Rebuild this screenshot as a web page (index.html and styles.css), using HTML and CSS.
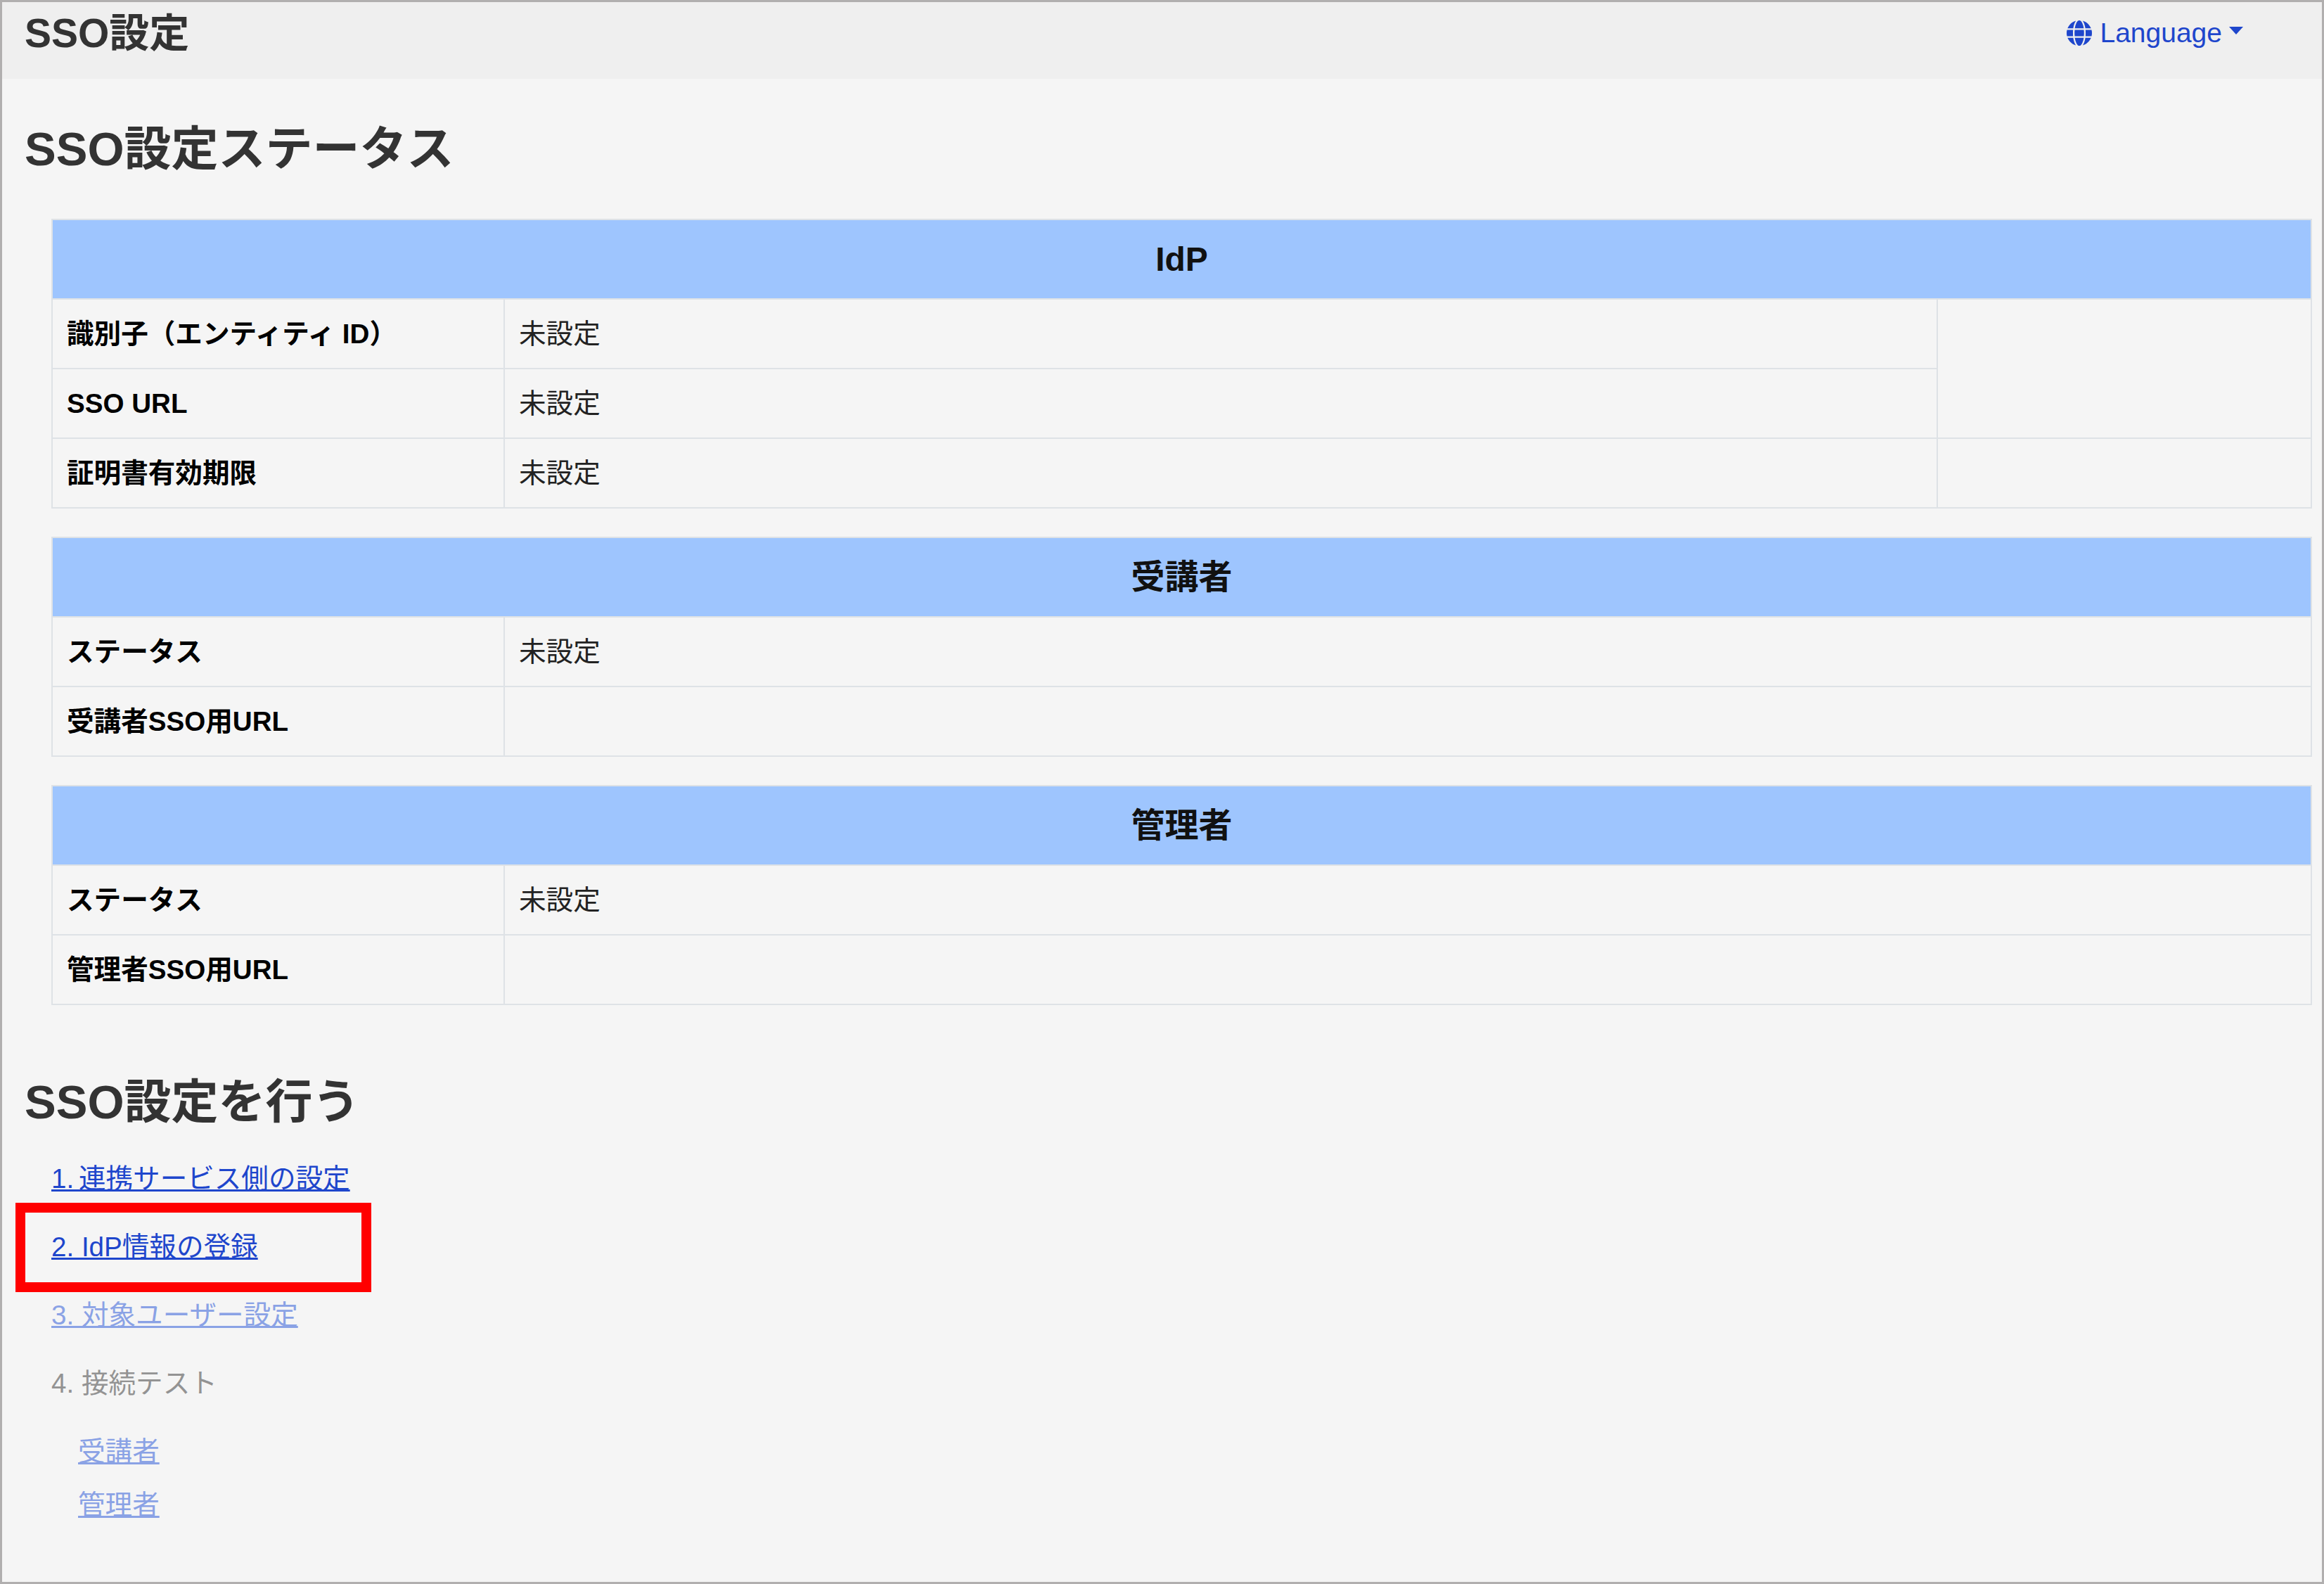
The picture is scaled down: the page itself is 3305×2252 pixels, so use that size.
FILE: index.html
```html
<!DOCTYPE html>
<html lang="ja">
<head>
<meta charset="utf-8">
<title>SSO設定</title>
<link rel="stylesheet" href="styles.css">
</head>
<body>
<div class="frame">
  <header class="topbar">
    <div class="brand">SSO設定</div>
    <a class="lang" href="#">
      <svg class="globe" viewBox="0 0 512 512" aria-hidden="true"><path d="M352 256c0 22-1 44-4 64H164c-3-20-4-42-4-64s1-44 4-64h184c3 20 4 42 4 64zm30-64h122c6 20 8 42 8 64s-2 44-8 64H382c2-20 2-42 2-64s0-44-2-64zm112-32H379c-10-64-30-118-55-152 73 20 134 74 170 152zm-147 0H165c6-37 15-69 27-96 10-24 22-42 33-52 11-11 22-12 31-12s20 1 31 12c11 10 23 28 33 52 12 27 21 59 27 96zm-214 0H18C54 82 115 28 188 8c-25 34-45 88-55 152zM8 192h122c-2 20-2 42-2 64s0 44 2 64H8c-6-20-8-42-8-64s2-44 8-64zm184 256c-12-27-21-59-27-96h182c-6 37-15 69-27 96-10 24-22 42-33 52-11 11-22 12-31 12s-20-1-31-12c-11-10-23-28-33-52zm-59-96c10 64 30 118 55 152-73-20-134-74-170-152h115zm361 0c-36 78-97 132-170 152 25-34 45-88 55-152h115z"/></svg>
      <span>Language</span>
      <span class="caret"></span>
    </a>
  </header>

  <main class="content">
    <h2 class="section-title first">SSO設定ステータス</h2>
    <div class="tables">
      <table class="status">
        <colgroup><col class="c1"><col class="c2"><col class="c3"></colgroup>
        <thead><tr><th colspan="3">IdP</th></tr></thead>
        <tbody>
          <tr><th>識別子（エンティティ ID）</th><td>未設定</td><td rowspan="2"></td></tr>
          <tr><th>SSO URL</th><td>未設定</td></tr>
          <tr><th>証明書有効期限</th><td>未設定</td><td></td></tr>
        </tbody>
      </table>
      <table class="status">
        <colgroup><col class="c1"><col></colgroup>
        <thead><tr><th colspan="2">受講者</th></tr></thead>
        <tbody>
          <tr><th>ステータス</th><td>未設定</td></tr>
          <tr><th>受講者SSO用URL</th><td></td></tr>
        </tbody>
      </table>
      <table class="status">
        <colgroup><col class="c1"><col></colgroup>
        <thead><tr><th colspan="2">管理者</th></tr></thead>
        <tbody>
          <tr><th>ステータス</th><td>未設定</td></tr>
          <tr><th>管理者SSO用URL</th><td></td></tr>
        </tbody>
      </table>
    </div>

    <h2 class="section-title second">SSO設定を行う</h2>
    <nav class="steps">
      <a class="step tight" href="#">1. 連携サービス側の設定</a>
      <a class="step" href="#">2. IdP情報の登録</a>
      <a class="step faded" href="#">3. 対象ユーザー設定</a>
      <span class="step muted">4. 接続テスト</span>
      <div class="sub">
        <a class="faded" href="#">受講者</a>
        <a class="faded" href="#">管理者</a>
      </div>
    </nav>
  </main>
  <div class="highlight"></div>
</div>
</body>
</html>
```
FILE: styles.css
```css
* { box-sizing: border-box; }
html, body { margin: 0; padding: 0; }
body {
  font-family: "Liberation Sans", "Noto Sans CJK JP", sans-serif;
  color: #333;
  background: #fff;
}
.frame {
  position: relative;
  height: 2252px;
  border: 3px solid #b1afaf;
  background: #f5f5f5;
  overflow: hidden;
}
.topbar {
  height: 109px;
  background: #efefef;
  display: flex;
  justify-content: space-between;
  padding: 9px 112px 0 32px;
}
.brand { font-size: 57px; font-weight: 700; line-height: 70px; color: #333; }
.lang {
  display: flex;
  align-items: center;
  height: 60px;
  margin-top: 5px;
  gap: 11px;
  font-size: 39px;
  line-height: 56px;
  color: #1e46cc;
  text-decoration: none;
}
.globe { width: 36px; height: 38px; fill: #1e46cc; }
.caret {
  width: 0; height: 0;
  margin-left: -1px;
  margin-bottom: 8px;
  border-left: 10px solid transparent;
  border-right: 10px solid transparent;
  border-top: 11px solid #1e46cc;
}
.content { padding: 0 0 0 32px; }
.section-title { margin: 0; font-size: 67px; font-weight: 700; line-height: 80px; color: #333; }
.section-title.first { margin-top: 60px; }
.section-title.second { margin-top: 98px; }
.tables {
  margin: 59px 14px 0 38px;
  display: flex;
  flex-direction: column;
  gap: 40px;
}
.status {
  width: 100%;
  border-collapse: collapse;
  table-layout: fixed;
  font-size: 38.6px;
  line-height: 56px;
  color: #000;
}
.status th, .status td {
  border: 2px solid #dee2e6;
  padding: 0 20px;
  height: 99px;
  text-align: left;
  font-weight: 400;
}
.status tbody th { font-weight: 700; }
.status td { color: #222; }
.status thead th {
  height: 113px;
  background: #9ec5fe;
  text-align: center;
  font-size: 48px;
  font-weight: 700;
  color: #111;
}
.c1 { width: 643px; }
.c3 { width: 532px; }
.steps {
  margin: 41px 0 0 38px;
  display: flex;
  flex-direction: column;
  align-items: flex-start;
  font-size: 38.6px;
  line-height: 56px;
}
.step { margin-bottom: 41px; color: #1e46cc; }
.step.tight { word-spacing: -4px; }
.step.muted { color: #939393; margin-bottom: 41px; }
.step.faded, .faded { color: #8aa2e5; }
.sub { display: flex; flex-direction: column; align-items: flex-start; gap: 20px; margin-left: 38px; }
.highlight {
  position: absolute;
  left: 19px;
  top: 1707px;
  width: 506px;
  height: 127px;
  border: 14px solid #ff0000;
}
```
